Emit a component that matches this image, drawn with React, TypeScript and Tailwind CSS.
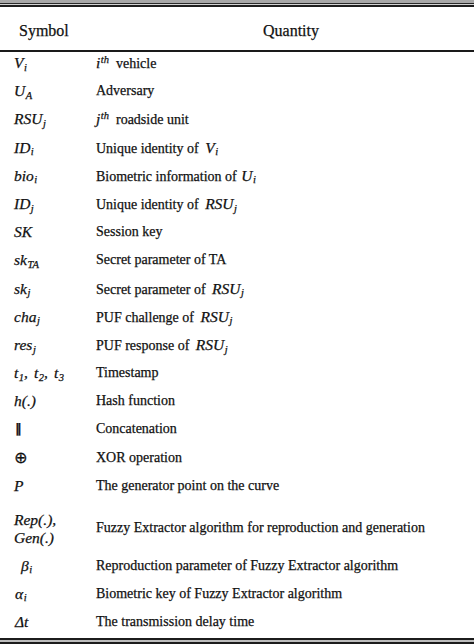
import React from "react";

const M = ({ children, className = "" }: { children: React.ReactNode; className?: string }) => (
  <span className={"italic font-['Liberation_Serif',serif] text-[15.5px] " + className}>{children}</span>
);
const Sb = ({ children }: { children: React.ReactNode }) => (
  <sub className="text-[10.5px] ml-[0.5px]">{children}</sub>
);
const Sp = ({ children }: { children: React.ReactNode }) => (
  <sup className="text-[10.5px] ml-[0.5px]">{children}</sup>
);

type Row = { sym: React.ReactNode; q: React.ReactNode; symCls?: string };

const rows: Row[] = [
  { sym: <M>V<Sb>i</Sb></M>, q: <><M>i<Sp>th</Sp></M><span className="ml-[7px]">vehicle</span></> },
  { sym: <M>U<Sb>A</Sb></M>, q: <>Adversary</> },
  { sym: <M>RSU<Sb>j</Sb></M>, q: <><M>j<Sp>th</Sp></M><span className="ml-[7px]">roadside unit</span></> },
  { sym: <M>ID<Sb>i</Sb></M>, q: <>Unique identity of <M className="ml-[3px]">V<Sb>i</Sb></M></> },
  { sym: <M>bio<Sb>i</Sb></M>, q: <>Biometric information of <M className="ml-[1px]">U<Sb>i</Sb></M></> },
  { sym: <M>ID<Sb>j</Sb></M>, q: <>Unique identity of <M className="ml-[3px]">RSU<Sb>j</Sb></M></> },
  { sym: <M>SK</M>, q: <>Session key</> },
  { sym: <M>sk<Sb>TA</Sb></M>, q: <>Secret parameter of TA</> },
  { sym: <M>sk<Sb>j</Sb></M>, q: <>Secret parameter of <M className="ml-[3px]">RSU<Sb>j</Sb></M></> },
  { sym: <M>cha<Sb>j</Sb></M>, q: <>PUF challenge of <M className="ml-[3px]">RSU<Sb>j</Sb></M></> },
  { sym: <M>res<Sb>j</Sb></M>, q: <>PUF response of <M className="ml-[3px]">RSU<Sb>j</Sb></M></> },
  {
    sym: (
      <M>
        t<Sb>1</Sb>,<span className="ml-[6px]">t</span><Sb>2</Sb>,<span className="ml-[6px]">t</span><Sb>3</Sb>
      </M>
    ),
    q: <>Timestamp</>,
  },
  { sym: <M>h(.)</M>, q: <>Hash function</> },
  { sym: <span className="font-['DejaVu_Sans',sans-serif] font-bold text-[13px] ml-[1px]">‖</span>, q: <>Concatenation</> },
  { sym: <span className="font-['DejaVu_Sans',sans-serif] text-[16px]">⊕</span>, q: <>XOR operation</> },
  { sym: <M>P</M>, q: <>The generator point on the curve</> },
];

const tail: Row[] = [
  { sym: <M>β<Sb>i</Sb></M>, q: <>Reproduction parameter of Fuzzy Extractor algorithm</>, symCls: "pl-[21px]" },
  { sym: <M>α<Sb>i</Sb></M>, q: <>Biometric key of Fuzzy Extractor algorithm</>, symCls: "pl-[15px]" },
  { sym: <M>Δt</M>, q: <>The transmission delay time</>, symCls: "pl-[15px]" },
];

export default function App() {
  return (
    <div className="w-[474px] h-[644px] bg-white overflow-hidden text-[#111111] font-['Liberation_Serif',serif] text-[14px] [-webkit-text-stroke:0.25px_#111111]">
      {/* top rules */}
      <div className="h-[3px] bg-[#a8a8a8]" />
      <div className="h-[1px] bg-[#2a2a2a]" />
      <div className="h-[1px] bg-[#d4d4d4]" />
      <div className="h-[1.5px] bg-[#1e1e1e]" />
      {/* header */}
      <div className="h-[43.5px] flex items-center pt-[5px] text-[16px]">
        <div className="w-[96px] pl-[19px]">Symbol</div>
        <div className="pl-[167px]">Quantity</div>
      </div>
      <div className="h-[1.5px] bg-[#1a1a1a]" />
      {/* body */}
      {rows.map((r, i) => (
        <div key={i} className="h-[28.2px] flex items-start pt-[1.5px] leading-[20px]">
          <div className={"w-[96px] shrink-0 " + (r.symCls ?? "pl-[14px]")}>{r.sym}</div>
          <div>{r.q}</div>
        </div>
      ))}
      <div className="h-[50px] flex items-center pb-[2px]">
        <div className="w-[96px] shrink-0 pl-[14px] leading-[17px] pt-[4px]">
          <div>
            <M>Rep(.),</M>
          </div>
          <div>
            <M>Gen(.)</M>
          </div>
        </div>
        <div className="leading-[20px] pt-[2px]">Fuzzy Extractor algorithm for reproduction and generation</div>
      </div>
      {tail.map((r, i) => (
        <div key={i} className="h-[28px] flex items-start pt-[3px] leading-[20px]">
          <div className={"w-[96px] shrink-0 " + (r.symCls ?? "pl-[14px]")}>{r.sym}</div>
          <div>{r.q}</div>
        </div>
      ))}
      {/* bottom rules */}
      <div className="h-[1.5px] bg-white" />
      <div className="h-[2px] bg-[#1c1c1c]" />
      <div className="h-[1.5px] bg-[#bdbdbd]" />
      <div className="h-[2px] bg-[#1c1c1c]" />
    </div>
  );
}
